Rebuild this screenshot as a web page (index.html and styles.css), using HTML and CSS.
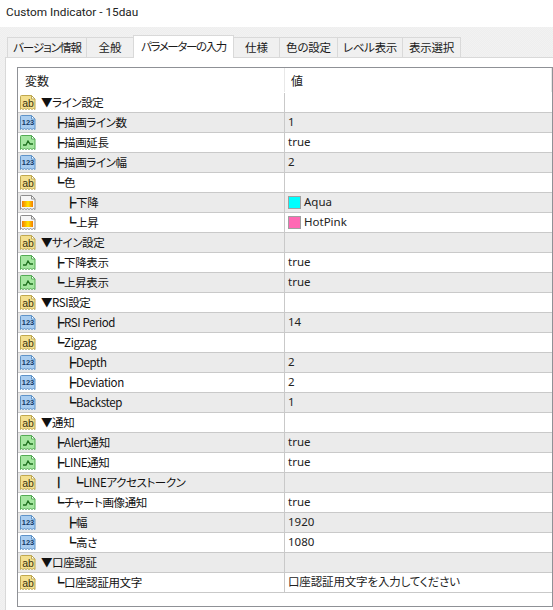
FILE: index.html
```html
<!DOCTYPE html>
<html lang="ja">
<head>
<meta charset="utf-8">
<title>Custom Indicator - 15dau</title>
<link rel="stylesheet" href="styles.css">
</head>
<body>
<svg class="defs" width="0" height="0" aria-hidden="true">
  <defs>
    <symbol id="doc" viewBox="0 0 16 16">
      <path d="M.5 1.5a1 1 0 0 1 1-1h10l3.500 3.500v10.500l-1.500-1-1.500 1-1.500-1-1.500 1-1.500-1-1.500 1-1.500-1-1.500 1-1.500-1-1 1z"/>
      <path class="fold" d="M11.500 .5v3.500h3.500z"/>
    </symbol>
  </defs>
</svg>
<header class="title">Custom Indicator - 15dau</header>
<main class="dialog">
  <nav class="tabs">
    <span class="tab w1">バージョン情報</span>
    <span class="tab w2">全般</span>
    <span class="tab active">パラメーターの入力</span>
    <span class="tab w4">仕様</span>
    <span class="tab w5">色の設定</span>
    <span class="tab w6">レベル表示</span>
    <span class="tab w7">表示選択</span>
  </nav>
  <section class="panel">
    <div class="list">
      <div class="head"><span class="hname">変数</span><span class="hval">値</span></div>

      <div class="row"><span class="name"><svg class="ic ab"><use href="#doc"/></svg><i class="lab">ab</i><span class="t d0">▼ライン設定</span></span><span class="val"></span></div>
      <div class="row"><span class="name"><svg class="ic num"><use href="#doc"/></svg><i class="lab">123</i><span class="t d1">┣描画ライン数</span></span><span class="val">1</span></div>
      <div class="row"><span class="name"><svg class="ic bool"><use href="#doc"/></svg><svg class="wave" viewBox="0 0 10 6"><path d="M0 5h3l2-4 2 3h3"/></svg><span class="t d1">┣描画延長</span></span><span class="val">true</span></div>
      <div class="row"><span class="name"><svg class="ic num"><use href="#doc"/></svg><i class="lab">123</i><span class="t d1">┣描画ライン幅</span></span><span class="val">2</span></div>
      <div class="row"><span class="name"><svg class="ic ab"><use href="#doc"/></svg><i class="lab">ab</i><span class="t d1">┗色</span></span><span class="val"></span></div>
      <div class="row"><span class="name"><svg class="ic col"><use href="#doc"/></svg><b class="grad"></b><span class="t d2">┣下降</span></span><span class="val"><b class="sw aqua"></b>Aqua</span></div>
      <div class="row"><span class="name"><svg class="ic col"><use href="#doc"/></svg><b class="grad"></b><span class="t d2">┗上昇</span></span><span class="val"><b class="sw pink"></b>HotPink</span></div>
      <div class="row"><span class="name"><svg class="ic ab"><use href="#doc"/></svg><i class="lab">ab</i><span class="t d0">▼サイン設定</span></span><span class="val"></span></div>
      <div class="row"><span class="name"><svg class="ic bool"><use href="#doc"/></svg><svg class="wave" viewBox="0 0 10 6"><path d="M0 5h3l2-4 2 3h3"/></svg><span class="t d1">┣下降表示</span></span><span class="val">true</span></div>
      <div class="row"><span class="name"><svg class="ic bool"><use href="#doc"/></svg><svg class="wave" viewBox="0 0 10 6"><path d="M0 5h3l2-4 2 3h3"/></svg><span class="t d1">┗上昇表示</span></span><span class="val">true</span></div>
      <div class="row"><span class="name"><svg class="ic ab"><use href="#doc"/></svg><i class="lab">ab</i><span class="t d0">▼RSI設定</span></span><span class="val"></span></div>
      <div class="row"><span class="name"><svg class="ic num"><use href="#doc"/></svg><i class="lab">123</i><span class="t d1">┣RSI Period</span></span><span class="val">14</span></div>
      <div class="row"><span class="name"><svg class="ic ab"><use href="#doc"/></svg><i class="lab">ab</i><span class="t d1">┗Zigzag</span></span><span class="val"></span></div>
      <div class="row"><span class="name"><svg class="ic num"><use href="#doc"/></svg><i class="lab">123</i><span class="t d2">┣Depth</span></span><span class="val">2</span></div>
      <div class="row"><span class="name"><svg class="ic num"><use href="#doc"/></svg><i class="lab">123</i><span class="t d2">┣Deviation</span></span><span class="val">2</span></div>
      <div class="row"><span class="name"><svg class="ic num"><use href="#doc"/></svg><i class="lab">123</i><span class="t d2">┗Backstep</span></span><span class="val">1</span></div>
      <div class="row"><span class="name"><svg class="ic ab"><use href="#doc"/></svg><i class="lab">ab</i><span class="t d0">▼通知</span></span><span class="val"></span></div>
      <div class="row"><span class="name"><svg class="ic bool"><use href="#doc"/></svg><svg class="wave" viewBox="0 0 10 6"><path d="M0 5h3l2-4 2 3h3"/></svg><span class="t d1">┣Alert通知</span></span><span class="val">true</span></div>
      <div class="row"><span class="name"><svg class="ic bool"><use href="#doc"/></svg><svg class="wave" viewBox="0 0 10 6"><path d="M0 5h3l2-4 2 3h3"/></svg><span class="t d1">┣LINE通知</span></span><span class="val">true</span></div>
      <div class="row"><span class="name"><svg class="ic ab"><use href="#doc"/></svg><i class="lab">ab</i><span class="t d1">┃<span class="sub">┗LINEアクセストークン</span></span></span><span class="val"></span></div>
      <div class="row"><span class="name"><svg class="ic bool"><use href="#doc"/></svg><svg class="wave" viewBox="0 0 10 6"><path d="M0 5h3l2-4 2 3h3"/></svg><span class="t d1">┗チャート画像通知</span></span><span class="val">true</span></div>
      <div class="row"><span class="name"><svg class="ic num"><use href="#doc"/></svg><i class="lab">123</i><span class="t d2">┣幅</span></span><span class="val">1920</span></div>
      <div class="row"><span class="name"><svg class="ic num"><use href="#doc"/></svg><i class="lab">123</i><span class="t d2">┗高さ</span></span><span class="val">1080</span></div>
      <div class="row"><span class="name"><svg class="ic ab"><use href="#doc"/></svg><i class="lab">ab</i><span class="t d0">▼口座認証</span></span><span class="val"></span></div>
      <div class="row"><span class="name"><svg class="ic ab"><use href="#doc"/></svg><i class="lab">ab</i><span class="t d1">┗口座認証用文字</span></span><span class="val long">口座認証用文字を入力してください</span></div>
    </div>
  </section>
</main>
</body>
</html>
```
FILE: styles.css
```css
* { box-sizing: border-box; }
html, body { margin: 0; padding: 0; }
body {
  width: 553px;
  height: 610px;
  overflow: hidden;
  background: #fff;
  color: #1a1a1a;
  font: 12px/16px "Noto Sans CJK JP", "Noto Sans", sans-serif;
  font-feature-settings: "palt";
}
.defs { position: absolute; }
.title {
  height: 27px;
  padding: 4px 0 0 6px;
  font-family: Roboto, "Noto Sans CJK JP", sans-serif;
  font-size: 11.800px;
  line-height: 16px;
  color: #222;
}
.dialog {
  height: 583px;
  padding: 8px 0 0 5px;
  background: repeating-conic-gradient(#f2f2f2 0 25%, #eeeeee 0 50%) 0 0 / 2px 2px;
}
.tabs {
  display: flex;
  height: 22px;
  padding-left: 2px;
  align-items: flex-end;
  position: relative;
  z-index: 1;
}
.tab {
  height: 20px;
  border: 1px solid #d9d9d9;
  border-bottom: 0;
  margin-right: -1px;
  background: #f0f0f0;
  font-size: 11.500px;
  line-height: 19px;
  text-align: center;
  white-space: nowrap;
}
.w1 { width: 80px; letter-spacing: -1px; }
.w2 { width: 48px; }
.w4 { width: 47px; }
.w5 { width: 59px; letter-spacing: -0.200px; }
.w6 { width: 66px; letter-spacing: -0.300px; }
.w7 { width: 59px; letter-spacing: -0.200px; }
.tab.active {
  width: 101px;
  height: 23px;
  margin-bottom: -1px;
  background: #fff;
  z-index: 1;
  line-height: 20px;
  letter-spacing: -1.400px;
}
.panel {
  height: 553px;
  padding: 9px 0 0 11px;
  border-top: 1px solid #d9d9d9;
  border-left: 1px solid #d9d9d9;
  background: #fff;
}
.list {
  width: 536px;
  height: 540px;
  border: 1px solid #8f9196;
  background: #fff;
}
.head {
  display: flex;
  height: 25px;
}
.hname {
  width: 266px;
  padding: 5px 0 0 7px;
}
.hval {
  flex: 1;
  height: 24px;
  padding: 5px 0 0 6px;
  border-left: 1px solid #e8e8e8;
  border-right: 1px solid #e8e8e8;
}
.row {
  display: flex;
  height: 20px;
  border-bottom: 1px solid #c9c9c9;
}
.row:nth-child(odd) { background: #ebebeb; }
.name {
  position: relative;
  display: flex;
  align-items: center;
  width: 266px;
  padding-left: 2px;
  white-space: nowrap;
  overflow: hidden;
}
.val {
  flex: 1;
  display: flex;
  align-items: center;
  padding: 0 0 2px 3px;
  border-left: 1px solid #c9c9c9;
  font-family: "Noto Sans", "Noto Sans CJK JP", sans-serif;
  font-size: 11.500px;
  white-space: nowrap;
  color: #222;
}
.long { letter-spacing: -0.150px; }
.ic {
  flex: none;
  width: 16px;
  height: 16px;
}
.ab { fill: #f3df8e; stroke: #bfa850; }
.num { fill: #a9cdf0; stroke: #5f93c8; }
.bool { fill: #a5e6a0; stroke: #55ab55; }
.col { fill: #f6f6f6; stroke: #8d8d8d; }
.fold { fill: #fff; }
.lab {
  position: absolute;
  left: 2px;
  top: 3px;
  width: 16px;
  text-align: center;
  font: normal 10.500px/14px "Liberation Sans", sans-serif;
  color: #3a3310;
}
.num + .lab {
  font-size: 7.500px;
  font-weight: bold;
  color: #143a66;
}
.wave {
  position: absolute;
  left: 5px;
  top: 7px;
  width: 10px;
  height: 6px;
  fill: none;
  stroke: #1d6e1d;
  stroke-width: 1.300;
}
.grad {
  position: absolute;
  left: 4px;
  top: 8px;
  width: 11px;
  height: 6px;
  background: linear-gradient(90deg, #f47a00, #ffe600 55%, #f47a00);
}
.t {
  margin-bottom: 2px;
  color: #111;
  font-size: 11.500px;
  letter-spacing: -0.400px;
}
.d0 { margin-left: 5px; }
.d1 { margin-left: 17px; }
.d2 { margin-left: 29px; }
.sub { margin-left: 8px; }
.sw {
  flex: none;
  width: 13px;
  height: 13px;
  margin: 2px 3px 0 0;
  border: 1px solid #a0a0a0;
}
.aqua { background: #00ffff; }
.pink { background: #ff69b4; }
```
